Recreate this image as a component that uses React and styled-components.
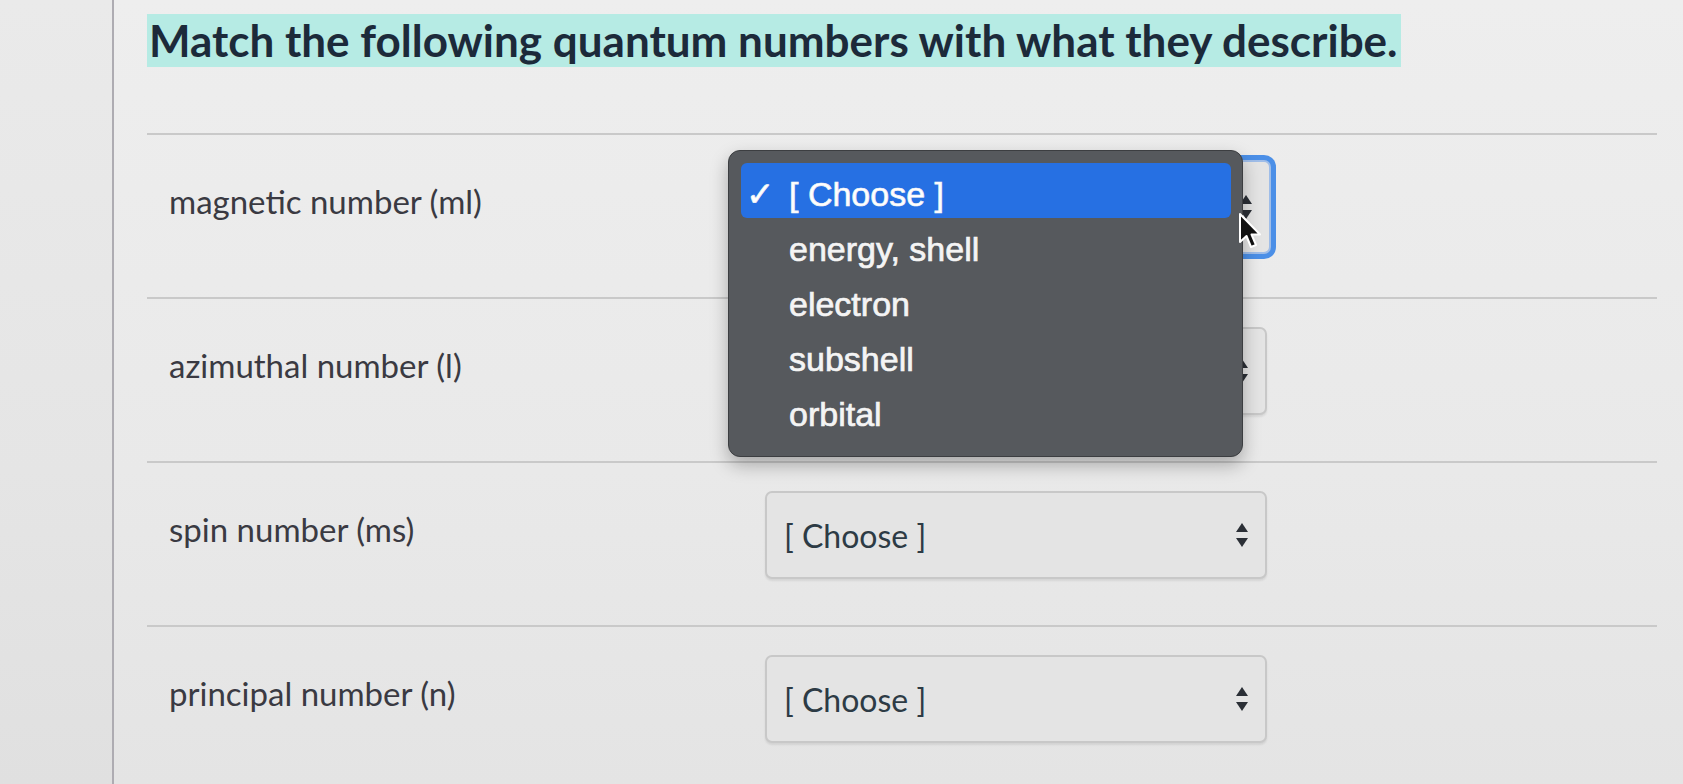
import React from 'react';
import styled, { createGlobalStyle, css } from 'styled-components';

const GlobalStyle = createGlobalStyle`
  html, body {
    margin: 0;
    padding: 0;
  }
  body {
    background: linear-gradient(180deg, #eeeeee 0%, #e9e9e9 60%, #e4e4e4 100%);
    font-family: Lato, "Open Sans", sans-serif;
    overflow: hidden;
  }
`;

const Page = styled.div`
  display: flex;
  width: 1683px;
  height: 784px;
`;

const Gutter = styled.div`
  width: 112px;
  flex-shrink: 0;
  background: rgba(0, 0, 0, 0.015);
  border-right: 2px solid #aeacb2;
`;

const Main = styled.main`
  flex: 1;
  padding: 14px 26px 0 33px;
`;

const Heading = styled.h1`
  display: inline-block;
  margin: 0;
  padding: 0 3px 0 2px;
  background: #b6ebe4;
  color: #1c2a3a;
  font-family: Lato, sans-serif;
  font-weight: 700;
  font-size: 44px;
  line-height: 53px;
`;

const QuestionList = styled.div`
  margin-top: 66px;
`;

const Row = styled.div`
  display: flex;
  align-items: center;
  height: 162px;
  padding-left: 22px;
  border-top: 2px solid #c9c9c9;
`;

const Label = styled.div`
  width: 596px;
  flex-shrink: 0;
  margin-bottom: 30px;
  color: #3a3a42;
  font-size: 33px;
`;

const SelectWrap = styled.div`
  position: relative;
  margin-bottom: 18px;
`;

const SelectBox = styled.div`
  display: flex;
  align-items: center;
  justify-content: space-between;
  box-sizing: border-box;
  width: 502px;
  height: 88px;
  padding: 0 16px 0 17px;
  background: #e4e4e4;
  border: 2px solid #c8c8c8;
  border-radius: 7px;
  box-shadow: 0 2px 2px rgba(0, 0, 0, 0.08);
  color: #2d3b45;
  font-size: 32px;

  ${({ $focused }) =>
    $focused &&
    css`
      width: 506px;
      height: 94px;
      border-color: #9fbde8;
      box-shadow: 0 0 0 5px #4b8fe7;
    `}
`;

const Arrows = () => (
  <svg width="14" height="26" viewBox="0 0 14 26">
    <path d="M7 1 L13 10 L1 10 Z" fill="#2b2f36" />
    <path d="M7 25 L13 16 L1 16 Z" fill="#2b2f36" />
  </svg>
);

const Menu = styled.ul`
  position: absolute;
  left: -37px;
  top: -10px;
  width: 515px;
  box-sizing: border-box;
  margin: 0;
  padding: 12px 11px 18px 12px;
  list-style: none;
  background: #56595d;
  border: 1px solid #3c3e41;
  border-radius: 12px;
  box-shadow: 0 8px 18px rgba(0, 0, 0, 0.28);
  z-index: 2;
`;

const MenuItem = styled.li`
  display: flex;
  align-items: center;
  box-sizing: border-box;
  height: 55px;
  padding: 7px 0 0 5px;
  border-radius: 6px;
  color: #f4f4f4;
  font-family: "Liberation Sans", Arial, sans-serif;
  font-size: 34px;
  font-weight: 400;
  -webkit-text-stroke: 0.7px #f4f4f4;

  ${({ $active }) =>
    $active &&
    css`
      background: #2670e3;
      color: #ffffff;
    `}
`;

const Check = styled.span`
  width: 43px;
  flex-shrink: 0;
  font-size: 34px;
`;

const Cursor = styled.svg`
  position: absolute;
  left: 473px;
  top: 52px;
  z-index: 3;
`;

const options = ['[ Choose ]', 'energy, shell', 'electron', 'subshell', 'orbital'];

const questions = [
  { label: 'magnetic number (ml)', open: true },
  { label: 'azimuthal number (l)' },
  { label: 'spin number (ms)' },
  { label: 'principal number (n)' },
];

const App = () => {
  return (
    <>
      <GlobalStyle />
      <Page>
        <Gutter />
        <Main>
          <Heading>Match the following quantum numbers with what they describe.</Heading>
          <QuestionList>
            {questions.map((q) => (
              <Row key={q.label}>
                <Label>{q.label}</Label>
                <SelectWrap>
                  <SelectBox $focused={q.open}>
                    <span>[ Choose ]</span>
                    <Arrows />
                  </SelectBox>
                  {q.open && (
                    <>
                      <Menu role="listbox">
                        {options.map((opt, i) => (
                          <MenuItem key={opt} $active={i === 0}>
                            <Check>{i === 0 ? '✓' : ''}</Check>
                            {opt}
                          </MenuItem>
                        ))}
                      </Menu>
                      <Cursor width="26" height="38" viewBox="0 0 26 38">
                        <path
                          d="M2 2 L2 30 L8.5 24 L13 35 L18 33 L13.5 22.5 L22 22.5 Z"
                          fill="#111"
                          stroke="#fff"
                          strokeWidth="2"
                          strokeLinejoin="round"
                        />
                      </Cursor>
                    </>
                  )}
                </SelectWrap>
              </Row>
            ))}
          </QuestionList>
        </Main>
      </Page>
    </>
  );
};

export default App;
